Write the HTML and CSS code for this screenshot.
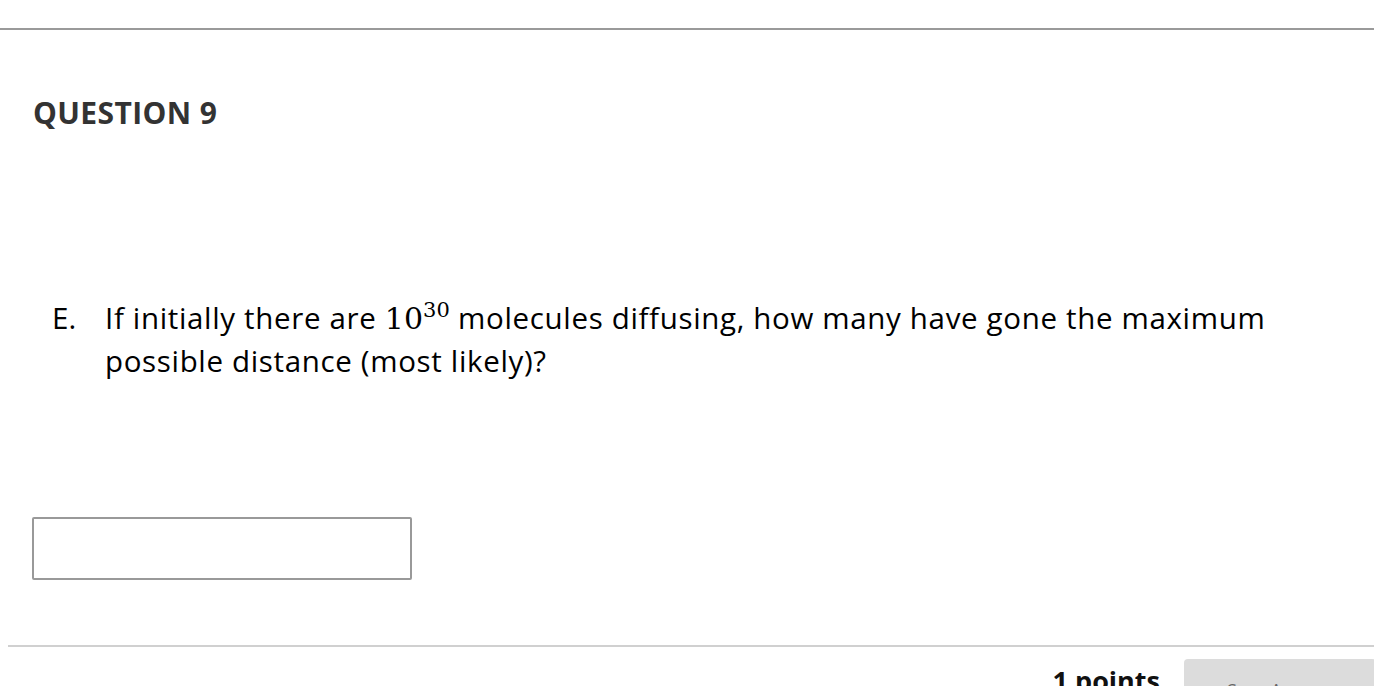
FILE: index.html
```html
<!DOCTYPE html>
<html lang="en">
<head>
<meta charset="utf-8">
<title>Question 9</title>
<link rel="stylesheet" href="styles.css">
</head>
<body>
<div class="page">
  <div class="top-rule"></div>
  <h2 class="q-title">QUESTION 9</h2>
  <div class="q-body">
    <div class="q-item">
      <span class="q-marker">E.</span>
      <p class="q-text">If initially there are <span class="math">10<sup>30</sup></span> molecules diffusing, how many have gone the maximum possible distance (most likely)?</p>
    </div>
  </div>
  <div class="answer-row">
    <input class="answer" type="text" aria-label="Answer">
  </div>
  <div class="footer">
    <div class="bottom-rule"></div>
    <div class="footer-row">
      <span class="points">1 points</span>
      <button class="save" type="button">Save Answer</button>
    </div>
  </div>
</div>
</body>
</html>
```

FILE: styles.css
```css
html, body {
  margin: 0;
  padding: 0;
  background: #ffffff;
  overflow: hidden;
}

.page {
  width: 1374px;
  height: 686px;
  overflow: hidden;
  display: flex;
  flex-direction: column;
}

.page > * {
  flex: none;
}

.top-rule {
  margin-top: 28px;
  height: 2px;
  background: #9a9a9a;
}

.q-title {
  margin: 63px 0 0 33px;
  font-family: "Open Sans", sans-serif;
  font-weight: 700;
  font-size: 30px;
  letter-spacing: 0.4px;
  line-height: 40px;
  color: #333333;
}

.q-body {
  margin-top: 164px;
  padding-left: 52px;
}

.q-item {
  display: flex;
  font-family: "Open Sans", "Noto Sans", sans-serif;
  font-size: 29.5px;
  letter-spacing: 0.66px;
  line-height: 42px;
  color: #000000;
}

.q-marker {
  width: 53px;
  flex: none;
  letter-spacing: 0;
}

.q-text {
  margin: 0;
  width: 1200px;
}

.math {
  font-family: "DejaVu Serif", "Liberation Serif", serif;
  font-size: 30px;
  letter-spacing: 0;
}

.math sup {
  font-size: 21px;
  line-height: 0;
  vertical-align: 12px;
}

.answer-row {
  margin-top: 135px;
  padding-left: 32px;
}

.answer {
  display: block;
  box-sizing: border-box;
  width: 380px;
  height: 63px;
  margin: 0;
  border: 2px solid #999999;
  border-radius: 2px;
  background: #ffffff;
  outline: none;
}

.footer {
  margin-top: 65px;
  padding-left: 8px;
}

.bottom-rule {
  height: 2px;
  background: #d0d0d0;
}

.footer-row {
  display: flex;
  justify-content: flex-end;
  align-items: flex-start;
  gap: 24px;
  margin-top: 12px;
}

.points {
  font-family: "Open Sans", sans-serif;
  font-weight: 700;
  font-size: 27px;
  line-height: 36px;
  margin-top: 4px;
  color: #111111;
}

.save {
  width: 192px;
  height: 48px;
  margin-right: -2px;
  border: none;
  border-radius: 4px;
  background: #dcdcdc;
  color: #666666;
  font-family: "Open Sans", sans-serif;
  font-size: 18px;
  padding: 0;
  padding-top: 14px;
  line-height: 24px;
}
```
